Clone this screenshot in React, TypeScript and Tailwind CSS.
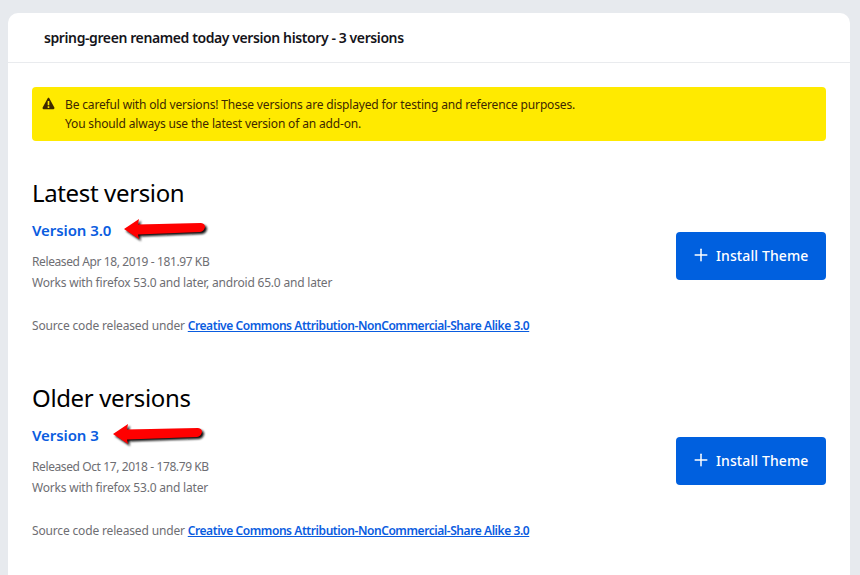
import React from "react";
import { Plus } from "lucide-react";

const font = "font-['Noto_Sans','Open_Sans',sans-serif]";

const RedArrow = ({ width }: { width: number }) => {
  const d = `M1 14 L16 4 L15 9.500 L${width - 9} 8 Q${width - 5} 8.500 ${width - 5} 12 Q${width - 6} 16.500 ${width - 10} 17 L15 19.500 L16 24 Z`;
  return (
    <svg width={width + 4} height="30" viewBox={`0 0 ${width + 4} 30`} className="absolute top-0 left-0">
      <defs>
        <filter id="arrowShadow" x="-10%" y="-30%" width="120%" height="170%">
          <feGaussianBlur stdDeviation="1" />
        </filter>
      </defs>
      <path d={d} fill="#111" filter="url(#arrowShadow)" transform="translate(2 2)" />
      <path d={d} fill="#ff0000" />
    </svg>
  );
};

type VersionProps = {
  heading: string;
  name: string;
  released: string;
  works: string;
  arrowWidth: number;
  arrowClass: string;
  className: string;
};

const Version = ({ heading, name, released, works, arrowWidth, arrowClass, className }: VersionProps) => (
  <section className={`flex items-center justify-between ${className}`}>
    <div>
      <h2 className="text-[24px] leading-[30px] text-black tracking-[-0.36px]">{heading}</h2>
      <div className="relative mt-[10px]">
        <a className="block text-[15px] leading-[24px] font-semibold text-[#0a5cdf] tracking-[-0.08px]">{name}</a>
        <div className={`absolute top-[-3px] ${arrowClass}`}>
          <RedArrow width={arrowWidth} />
        </div>
      </div>
      <div className="mt-[10px] text-[12px] leading-[20.5px] text-[#6e6e73]">
        <p className="tracking-[-0.4px]">{released}</p>
        <p className="tracking-[-0.2px]">{works}</p>
      </div>
      <p className="mt-[23px] text-[12px] leading-[20px] text-[#6e6e73] tracking-[-0.16px]">
        Source code released under{" "}
        <a className="font-semibold text-[#0a5cdf] underline tracking-[-0.43px]">
          Creative Commons Attribution-NonCommercial-Share Alike 3.0
        </a>
      </p>
    </div>
    <button className="flex items-center justify-start gap-[5px] w-[150px] h-[48px] pl-[15px] pb-[2px] mt-[-2px] rounded-[4px] bg-[#0060df] text-white text-[14px] font-medium tracking-[0.1px]">
      <Plus size={20} strokeWidth={1.8} />
      Install Theme
    </button>
  </section>
);

export default function App() {
  return (
    <div className={`h-[575px] overflow-hidden bg-[#e7eaee] pl-2 pr-[10px] pt-[13px] ${font}`}>
      <div className="h-[600px] rounded-t-[10px] bg-white">
        <header className="h-[50px] flex items-center border-b border-[#e9ebee] pl-9">
          <h1 className="text-[14px] font-semibold text-[#15141a] tracking-[-0.4px]">
            spring-green renamed today version history - 3 versions
          </h1>
        </header>
        <div className="px-6 pt-6">
          <div className="flex h-[54px] gap-[10px] rounded-[4px] bg-[#ffea00] pl-[10px] pt-[8px] text-[12px] leading-[19px] text-[#3e2800] tracking-[-0.16px]">
            <svg width="13" height="13" viewBox="0 0 16 16" className="mt-[2px] shrink-0">
              <path
                d="M8 1c-.4 0-.8.2-1 .6L.8 13c-.4.8.1 2 1.100 2h12.200c1 0 1.500-1.200 1.100-2L9 1.600C8.800 1.200 8.400 1 8 1zM7 5h2v5H7V5zm0 6.500h2v2H7v-2z"
                fill="#3e2800"
                fillRule="evenodd"
              />
            </svg>
            <div>
              <p>Be careful with old versions! These versions are displayed for testing and reference purposes.</p>
              <p>You should always use the latest version of an add-on.</p>
            </div>
          </div>
          <Version
            heading="Latest version"
            name="Version 3.0"
            released="Released Apr 18, 2019 - 181.97 KB"
            works="Works with firefox 53.0 and later, android 65.0 and later"
            arrowWidth={87}
            arrowClass="left-[91px]"
            className="mt-[37px]"
          />
          <Version
            heading="Older versions"
            name="Version 3"
            released="Released Oct 17, 2018 - 178.79 KB"
            works="Works with firefox 53.0 and later"
            arrowWidth={95}
            arrowClass="left-[80px]"
            className="mt-[47px]"
          />
        </div>
      </div>
    </div>
  );
}
